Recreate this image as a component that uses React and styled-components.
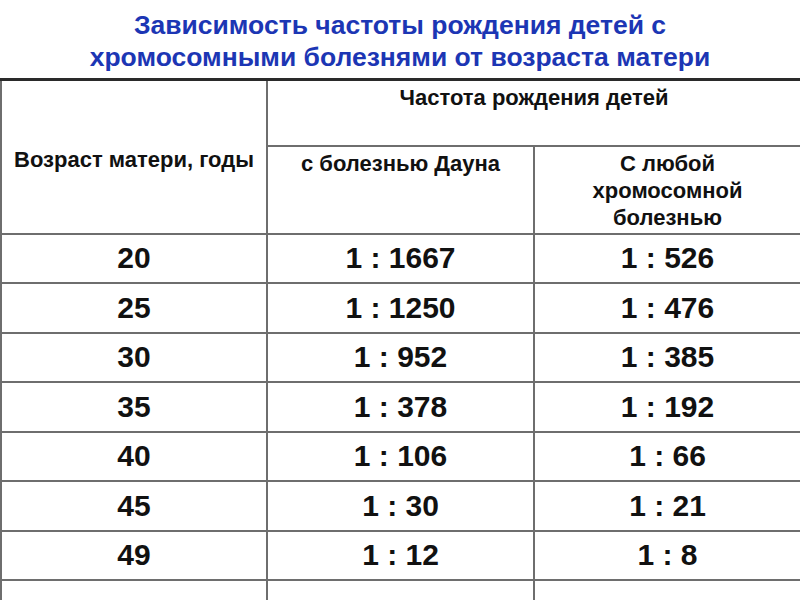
import styled, { createGlobalStyle } from "styled-components";

const GlobalStyle = createGlobalStyle`
  html, body {
    margin: 0;
    padding: 0;
    background: #ffffff;
    overflow: hidden;
  }
  body {
    font-family: "Liberation Sans", Arial, sans-serif;
  }
`;

const Slide = styled.div`
  width: 800px;
  height: 600px;
  overflow: hidden;
  background: #ffffff;
`;

const Title = styled.h1`
  margin: 0;
  padding-top: 9px;
  height: 69px;
  text-align: center;
  color: #1c36b4;
  font-size: 26.5px;
  font-weight: bold;
  line-height: 32px;
`;

const Table = styled.table`
  width: 800px;
  border-collapse: collapse;
  table-layout: fixed;
  border-top: 3px solid #2a2a2a;
`;

const Row = styled.tr`
  height: ${(p) => p.$h}px;
`;

const HeadCell = styled.th`
  border: 2px solid #6e6e6e;
  border-top: none;
  padding: ${(p) => (p.$middle ? "6px 4px 0" : "3px 4px 0")};
  vertical-align: ${(p) => (p.$middle ? "middle" : "top")};
  text-align: center;
  color: #111;
  font-size: 22px;
  font-weight: bold;
  line-height: 27px;
`;

const Cell = styled.td`
  border: 2px solid #6e6e6e;
  padding: 0;
  text-align: center;
  vertical-align: middle;
  color: #111;
  font-size: 30px;
  font-weight: bold;
  line-height: 32px;
`;

const rows = [
  ["20", "1 : 1667", "1 : 526"],
  ["25", "1 : 1250", "1 : 476"],
  ["30", "1 : 952", "1 : 385"],
  ["35", "1 : 378", "1 : 192"],
  ["40", "1 : 106", "1 : 66"],
  ["45", "1 : 30", "1 : 21"],
  ["49", "1 : 12", "1 : 8"],
  ["", "", ""],
];

const App = () => {
  return (
    <Slide>
      <GlobalStyle />
      <Title>
        Зависимость частоты рождения детей с
        <br />
        хромосомными болезнями от возраста матери
      </Title>
      <Table>
        <colgroup>
          <col style={{ width: "266px" }} />
          <col style={{ width: "267px" }} />
          <col style={{ width: "267px" }} />
        </colgroup>
        <thead>
          <Row $h={66}>
            <HeadCell rowSpan={2} $middle>
              Возраст матери, годы
            </HeadCell>
            <HeadCell colSpan={2}>Частота рождения детей</HeadCell>
          </Row>
          <Row $h={88}>
            <HeadCell>с болезнью Дауна</HeadCell>
            <HeadCell>
              С любой
              <br />
              хромосомной
              <br />
              болезнью
            </HeadCell>
          </Row>
        </thead>
        <tbody>
          {rows.map((r, i) => (
            <Row key={i} $h={49.5}>
              {r.map((v, j) => (
                <Cell key={j}>{v}</Cell>
              ))}
            </Row>
          ))}
        </tbody>
      </Table>
    </Slide>
  );
};

export default App;
